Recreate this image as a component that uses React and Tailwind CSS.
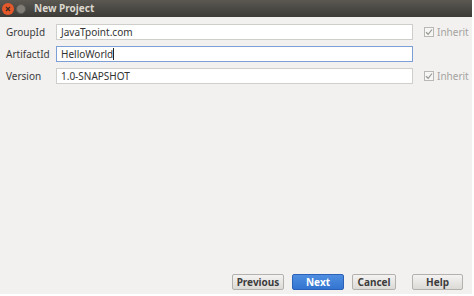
import React from 'react';

const font = { fontFamily: '"Noto Sans", "Open Sans", sans-serif' };

const Inherit = ({ show }) => (
  <div className={`flex items-center gap-[3px] whitespace-nowrap ${show ? '' : 'invisible'}`}>
    <span className="w-[10px] h-[10px] border border-[#b9b7b3] bg-[#f6f6f5] flex items-center justify-center">
      <svg width="8" height="8" viewBox="0 0 8 8">
        <path d="M1 4.2 L3.2 6.3 L7 1.5" fill="none" stroke="#9a9892" strokeWidth="1.2" />
      </svg>
    </span>
    <span className="text-[10px] text-[#a5a39f]">Inherit</span>
  </div>
);

const Row = ({ label, value, focused, inherit }) => (
  <div className="flex items-center h-[16px]">
    <span className="w-[56px] shrink-0 text-[10px] text-[#3c3c3c] pl-[6px]">{label}</span>
    <div
      className={`w-[357px] shrink-0 h-[16px] bg-white flex items-center pl-[4px] text-[10px] text-[#333] ${
        focused ? 'border-[1.5px] border-[#7b9fd6]' : 'border border-[#d0cecb]'
      }`}
    >
      {value}
      {focused && <span className="w-px h-[12px] bg-[#222]" />}
    </div>
    <div className="ml-[11px]">
      <Inherit show={inherit} />
    </div>
  </div>
);

const btn =
  'h-[16px] border border-[#b3b1ad] bg-gradient-to-b from-[#f4f3f2] to-[#dcdad6] rounded-[2px] text-[10px] font-bold text-[#3c3c3c] leading-none';

const App = () => {
  return (
    <div className="w-[474px] h-[296px] bg-white" style={font}>
      <div className="w-[472px] h-[294px] flex flex-col bg-[#f2f1f0]">
        <div className="h-[17px] shrink-0 flex items-center bg-gradient-to-b from-[#5b5852] to-[#3c3b37] px-[2px]">
          <span className="w-[12px] h-[12px] rounded-full bg-[#e5582a] flex items-center justify-center">
            <svg width="6" height="6" viewBox="0 0 6 6">
              <path d="M1 1 L5 5 M5 1 L1 5" stroke="#3a2a22" strokeWidth="1.2" />
            </svg>
          </span>
          <span className="ml-[2px] w-[10px] h-[10px] rounded-full bg-[#807d76] border border-[#5f5c56]" />
          <span className="ml-[8px] text-[10px] font-bold text-[#dcd8cf]">New Project</span>
        </div>
        <div className="flex flex-col gap-[6px] pt-[7px]">
          <Row label="GroupId" value="JavaTpoint.com" inherit />
          <Row label="ArtifactId" value="HelloWorld" focused />
          <Row label="Version" value="1.0-SNAPSHOT" inherit />
        </div>
        <div className="flex-1" />
        <div className="flex justify-end pr-[9px] pb-[4px]">
          <button className={`${btn} w-[52px]`}>Previous</button>
          <button className="ml-[8px] w-[52px] h-[16px] border border-[#2b62b8] bg-gradient-to-b from-[#4f8ee0] to-[#3274d0] rounded-[2px] text-[10px] font-bold text-white leading-none">
            Next
          </button>
          <button className={`${btn} ml-[8px] w-[44px]`}>Cancel</button>
          <button className={`${btn} ml-[16px] w-[51px]`}>Help</button>
        </div>
      </div>
    </div>
  );
};

export default App;
